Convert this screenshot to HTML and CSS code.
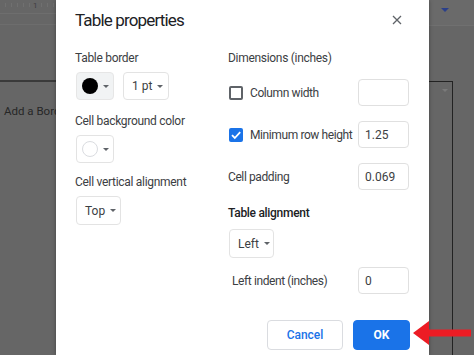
FILE: index.html
```html
<!DOCTYPE html>
<html>
<head>
<meta charset="utf-8">
<link rel="stylesheet" href="styles.css">
</head>
<body>
<div class="screen">
  <div class="bg bg-left">
    <div class="ruler"><span class="ruler-num">1</span></div>
    <div class="doc-line"></div>
    <div class="doc-text"><span class="bullet"></span>Add a Border</div>
  </div>

  <div class="dialog">
    <div class="head">
      <h1 class="title">Table properties</h1>
      <span class="close">
        <svg width="10" height="10" viewBox="0 0 10 10"><path d="M1 1 L9 9 M9 1 L1 9" stroke="#5f6368" stroke-width="1.3" fill="none"/></svg>
      </span>
    </div>

    <div class="cols">
      <div class="col col-left">
        <div class="label">Table border</div>
        <div class="ctrl-row">
          <div class="drop drop-color drop-gray"><span class="swatch swatch-black"></span><span class="caret"></span></div>
          <div class="drop drop-pt">1 pt<span class="caret"></span></div>
        </div>
        <div class="label label-gap">Cell background color</div>
        <div class="ctrl-row">
          <div class="drop drop-color"><span class="swatch swatch-white"></span><span class="caret"></span></div>
        </div>
        <div class="label label-gap2">Cell vertical alignment</div>
        <div class="ctrl-row">
          <div class="drop drop-top">Top<span class="caret"></span></div>
        </div>
      </div>

      <div class="col col-right">
        <div class="label">Dimensions (inches)</div>
        <div class="field-row first">
          <span class="check"></span><span class="field-label">Column width</span>
          <span class="input"></span>
        </div>
        <div class="field-row">
          <span class="check checked">
            <svg width="14" height="14" viewBox="0 0 14 14"><path d="M3 7.2 L5.8 10 L11.2 4.2" stroke="#fff" stroke-width="1.8" fill="none"/></svg>
          </span><span class="field-label">Minimum row height</span>
          <span class="input">1.25</span>
        </div>
        <div class="field-row">
          <span class="field-label">Cell padding</span>
          <span class="input">0.069</span>
        </div>
        <div class="label label-bold">Table alignment</div>
        <div class="ctrl-row ctrl-left">
          <div class="drop drop-left">Left<span class="caret"></span></div>
        </div>
        <div class="field-row indent">
          <span class="field-label">Left indent (inches)</span>
          <span class="input">0</span>
        </div>
      </div>
    </div>

    <div class="actions">
      <button class="btn btn-cancel">Cancel</button>
      <button class="btn btn-ok">OK</button>
    </div>
  </div>

  <div class="bg bg-right">
    <div class="toolbar"><span class="blue-caret"></span></div>
    <div class="doc-table"><span class="gray-caret"></span></div>
  </div>

  <svg class="arrow" width="60" height="26" viewBox="0 0 60 26">
    <polygon points="0,13 16,1 16,9.5 58,9.5 58,16.5 16,16.5 16,25" fill="#ec1c24"/>
  </svg>
</div>
</body>
</html>
```

FILE: styles.css
```css
* { box-sizing: border-box; }
html, body { margin: 0; padding: 0; }
body {
  width: 474px;
  height: 355px;
  overflow: hidden;
  background: #666666;
  font-family: Roboto, "Liberation Sans", sans-serif;
}
.screen {
  position: relative;
  display: flex;
  width: 474px;
  height: 355px;
  overflow: hidden;
}
.bg { position: relative; background: #666666; }
.bg-left { width: 56px; flex: none; z-index: 0; }
.bg-right { width: 45px; flex: none; overflow: hidden; }

.ruler {
  height: 25px;
  border-bottom: 1px solid #6d6d6d;
  position: relative;
  overflow: hidden;
  background:
    repeating-linear-gradient(90deg, transparent 0 5px, #707070 5px 6px) 0 3px / 100% 4px no-repeat;
}
.ruler::after {
  content: "";
  position: absolute;
  left: 0; right: 0; top: 13px;
  border-top: 1px solid #6e6e6e;
}
.ruler-num {
  position: absolute;
  left: 33px; top: 1px;
  font-size: 8px;
  color: #3a3a3a;
}
.doc-line {
  margin-top: 55px;
  height: 2px;
  background: #3a3a3a;
}
.doc-text {
  margin-top: 21px;
  white-space: nowrap;
  font-size: 11.5px;
  line-height: 16px;
  color: #262626;
  display: flex;
  align-items: center;
}
.bullet {
  display: inline-block;
  width: 2px; height: 4px;
  background: #262626;
  margin-right: 4px;
}

.dialog {
  position: relative;
  z-index: 1;
  width: 373px;
  flex: none;
  background: #fff;
  padding: 8px 20px 0 19px;
  box-shadow: 0 0 4px rgba(0,0,0,0.35);
  color: #3c4043;
}
.head {
  display: flex;
  justify-content: space-between;
  align-items: center;
  height: 24px;
}
.title {
  margin: 0;
  font-size: 17px;
  line-height: 24px;
  font-weight: 400;
  color: #202124;
  letter-spacing: -0.85px;
}
.close {
  display: flex;
  margin-right: 7px;
  margin-top: -1px;
}
.cols {
  display: flex;
  margin-top: 18px;
}
.col-left { width: 153px; flex: none; }
.col-right { flex: 1; min-width: 0; }

.label {
  font-size: 12px;
  line-height: 16px;
  height: 16px;
  letter-spacing: -0.3px;
  color: #3c4043;
  white-space: nowrap;
}
.label-gap { margin-top: 13px; }
.label-gap2 { margin-top: 11px; }
.label-bold { font-weight: 500; margin-top: 15px; color: #202124; }

.ctrl-row {
  display: flex;
  gap: 9px;
  margin-top: 6px;
}
.ctrl-left { margin-top: 8px; }
.drop {
  height: 28px;
  border: 1px solid #e3e3e3;
  border-radius: 4px;
  background: #fff;
  display: flex;
  align-items: center;
  font-size: 12px;
  color: #3c4043;
  padding-left: 8px;
}
.drop-gray { background: #f1f3f4; border-color: #e6e6e6; }
.drop-color { width: 38px; margin-left: 1px; padding-left: 5px; }
.drop-pt { width: 46px; }
.drop-top { width: 45px; height: 29px; margin-left: 1px; }
.drop-left { width: 45px; height: 29px; margin-left: 1px; }
.swatch {
  width: 16px; height: 16px;
  border-radius: 50%;
  flex: none;
}
.swatch-black { background: #000; }
.swatch-white { border: 1px solid #dadce0; background: #fff; }
.caret {
  width: 0; height: 0;
  border-left: 3px solid transparent;
  border-right: 3px solid transparent;
  border-top: 3px solid #5f6368;
  margin-left: 5px;
  flex: none;
}

.field-row {
  display: flex;
  align-items: center;
  height: 27px;
  margin-top: 15px;
  font-size: 12px;
  letter-spacing: -0.4px;
  color: #3c4043;
}
.field-row.first { margin-top: 13px; }
.field-row.indent { margin-top: 9px; }
.check {
  width: 14px; height: 14px;
  border: 2px solid #5f6368;
  border-radius: 2px;
  margin-left: 1px;
  margin-right: 7px;
  flex: none;
  display: flex;
  align-items: center;
  justify-content: center;
}
.check.checked { background: #1a73e8; border-color: #1a73e8; }
.check.checked svg { flex: none; margin: -2px; }
.field-label { white-space: nowrap; }
.indent .field-label { margin-left: 4px; }
.input {
  margin-left: auto;
  width: 51px;
  height: 27px;
  flex: none;
  border: 1px solid #e0e0e0;
  border-radius: 4px;
  padding-left: 6px;
  display: flex;
  align-items: center;
  font-size: 12px;
  letter-spacing: 0;
  color: #3c4043;
}

.actions {
  display: flex;
  justify-content: flex-end;
  gap: 10px;
  margin-top: 26px;
  margin-right: -1px;
}
.btn {
  height: 30px;
  border-radius: 4px;
  font-family: Roboto, "Liberation Sans", sans-serif;
  font-size: 12px;
  font-weight: 500;
  padding: 0;
}
.btn-cancel {
  width: 76px;
  background: #fff;
  border: 1px solid #dadce0;
  color: #1a73e8;
}
.btn-ok {
  width: 57px;
  background: #1a73e8;
  border: 1px solid #1a73e8;
  color: #fff;
  font-weight: 700;
}

.toolbar {
  height: 26px;
  background: #6a6a6a;
  border-bottom: 1px solid #707070;
  position: relative;
}
.blue-caret {
  position: absolute;
  left: 12px; top: 8px;
  width: 0; height: 0;
  border-left: 4px solid transparent;
  border-right: 4px solid transparent;
  border-top: 4px solid #2a3f8a;
}
.doc-table {
  position: relative;
  margin-top: 55px;
  width: 24px;
  height: 300px;
  border-top: 1px solid #222;
  border-right: 1px solid #222;
}
.gray-caret {
  position: absolute;
  left: 13px; top: 7px;
  width: 0; height: 0;
  border-left: 3px solid transparent;
  border-right: 3px solid transparent;
  border-top: 3px solid #7a7a7a;
}

.arrow {
  position: absolute;
  left: 413px;
  top: 320px;
  z-index: 2;
}
```
